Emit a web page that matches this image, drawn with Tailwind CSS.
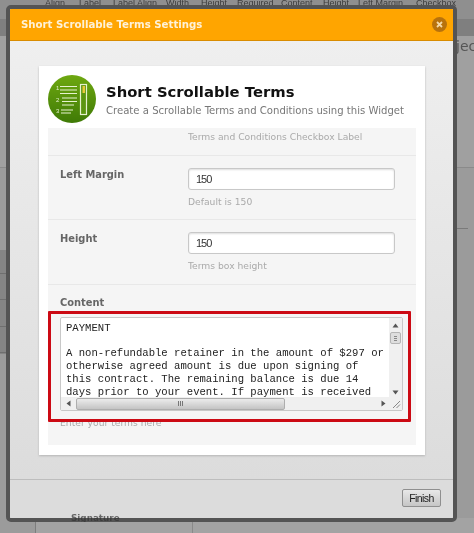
<!DOCTYPE html>
<html lang="en">
  <head>
    <meta charset="UTF-8" />
    <meta name="viewport" content="width=device-width, initial-scale=1.0" />
    <title>Short Scrollable Terms Settings</title>
    <script src="https://cdn.jsdelivr.net/npm/@tailwindcss/browser@4"></script>
  </head>
  <body class="bg-[#9c9c9c]">
    <div class="relative w-[474px] h-[533px] overflow-hidden blur-[0.3px] font-['DejaVu_Sans',sans-serif]">
      <!-- page behind the dialog -->
      <div class="flex flex-col h-full bg-[#9b9b9b]">
        <div class="flex h-[19px] bg-[#8f8f8f] font-['Liberation_Sans',sans-serif] text-[9px] leading-[6px] text-[#3c3c3c] overflow-hidden pl-[45px] whitespace-nowrap">
          <span class="w-[34px]">Align</span>
          <span class="w-[34px]">Label</span>
          <span class="w-[53px]">Label Align</span>
          <span class="w-[35px]">Width</span>
          <span class="w-[36px]">Height</span>
          <span class="w-[44px]">Required</span>
          <span class="w-[42px]">Content</span>
          <span class="w-[35px]">Height</span>
          <span class="w-[58px]">Left Margin</span>
          <span>Checkbox</span>
        </div>
        <div class="h-[17px] bg-[#7f7f7f]"></div>
        <div class="flex justify-end h-[132px] border-b border-[#8a8a8a] pt-[1px] bg-[#a0a0a0]">
          <span class="text-[14px] leading-[18px] text-[#555] w-[18px] overflow-hidden">jec</span>
        </div>
        <div class="flex justify-end h-[61px]">
          <div class="w-[11px] h-[1px] mt-[60px] mr-[6px] bg-[#7a7a7a]"></div>
        </div>
        <div class="flex-1"></div>
        <div class="flex h-[15px] ml-[35px] border-l border-[#7d7d7d] bg-[#a3a3a3]">
          <div class="w-[157px] border-r border-[#8a8a8a]"></div>
        </div>
      </div>
      <div class="absolute left-0 top-[250px] w-[10px] h-[104px] bg-[#858585] flex flex-col">
        <div class="h-[24px] border-b border-[#6f6f6f]"></div>
        <div class="h-[26px] border-b border-[#6f6f6f]"></div>
        <div class="h-[27px] border-b border-[#6f6f6f]"></div>
        <div class="h-[26px] border-b border-[#6f6f6f]"></div>
      </div>

      <!-- dialog -->
      <div class="absolute left-[6px] top-[5px] w-[451px] h-[517px] border-4 border-[#545454] rounded-[5px] flex flex-col overflow-hidden bg-[#dcdcdc]">
        <div class="flex items-center justify-between h-[32px] pl-[11px] pr-[6px] bg-[#ffa500] border-b border-[#d98c00]">
          <span class="text-[10.2px] font-bold text-[#fff2d8]">Short Scrollable Terms Settings</span>
          <span class="flex items-center justify-center w-[15px] h-[15px] rounded-full bg-[#b8720c]">
            <svg width="7" height="7" viewBox="0 0 7 7"><path d="M1 1l5 5M6 1l-5 5" stroke="#f3d9a8" stroke-width="1.8"/></svg>
          </span>
        </div>

        <div class="h-[439px] pt-[25px] px-[29px] bg-gradient-to-b from-[#efefef] to-[#dcdcdc] border-b border-[#bdbdbd]">
          <div class="w-[386px] h-[389px] bg-white shadow-[0_1px_2px_#b5b5b5] px-[9px] pb-[10px] flex flex-col">
            <div class="flex h-[62px] pt-[9px]">
              <svg width="48" height="48" viewBox="0 0 48 48" class="shrink-0">
                <defs>
                  <linearGradient id="logoGreen" x1="0" y1="0" x2="0" y2="1">
                    <stop offset="0" stop-color="#6ea810"/>
                    <stop offset="1" stop-color="#3f7a06"/>
                  </linearGradient>
                </defs>
                <circle cx="24" cy="24" r="24" fill="url(#logoGreen)"/>
                <g stroke="#e6f2cf" stroke-width="1.2">
                  <path d="M12 11.500h17M12 15h17M12 18.500h17M14 23h15M14 26.500h15M14 30h12M13 35h12M13 38h10"/>
                </g>
                <rect x="32.500" y="9.500" width="6" height="30" fill="#5c9610" stroke="#e6f2cf" stroke-width="1.200"/>
                <rect x="34.500" y="11" width="2.500" height="7" fill="#e8c93a"/>
                <text x="8" y="15" font-size="6" fill="#e6f2cf" font-family="Liberation Sans">1</text>
                <text x="8" y="27" font-size="6" fill="#e6f2cf" font-family="Liberation Sans">2</text>
                <text x="8" y="38" font-size="6" fill="#e6f2cf" font-family="Liberation Sans">3</text>
              </svg>
              <div class="ml-[10px] pt-[7px]">
                <div class="text-[14.8px] leading-[20px] font-bold text-[#111]">Short Scrollable Terms</div>
                <div class="text-[10.1px] leading-[14px] mt-[2px] text-[#777] whitespace-nowrap">Create a Scrollable Terms and Conditions using this Widget</div>
              </div>
            </div>

            <div class="flex-1 flex flex-col bg-[#f5f5f5] text-[9.2px] text-[#aaa]">
              <div class="h-[28px] border-b border-[#e8e8e8] pl-[140px] pt-[2px] leading-[14px]">Terms and Conditions Checkbox Label</div>

              <div class="flex h-[64px] border-b border-[#e8e8e8] pl-[12px]">
                <div class="w-[128px] pt-[11px] text-[9.9px] leading-[16px] font-bold text-[#666]">Left Margin</div>
                <div>
                  <div class="w-[207px] h-[22px] mt-[12px] pl-[7px] rounded-[3px] border border-[#c8c8c8] shadow-[inset_0_1px_2px_#ddd] bg-white font-['Liberation_Sans',sans-serif] text-[11px] tracking-[-1px] leading-[20px] text-[#333]">150</div>
                  <div class="mt-[5px] leading-[14px]">Default is 150</div>
                </div>
              </div>

              <div class="flex h-[65px] border-b border-[#e8e8e8] pl-[12px]">
                <div class="w-[128px] pt-[11px] text-[9.9px] leading-[16px] font-bold text-[#666]">Height</div>
                <div>
                  <div class="w-[207px] h-[22px] mt-[12px] pl-[7px] rounded-[3px] border border-[#c8c8c8] shadow-[inset_0_1px_2px_#ddd] bg-white font-['Liberation_Sans',sans-serif] text-[11px] tracking-[-1px] leading-[20px] text-[#333]">150</div>
                  <div class="mt-[5px] leading-[14px]">Terms box height</div>
                </div>
              </div>

              <div class="flex-1 pl-[12px] pt-[10px]">
                <div class="text-[9.9px] leading-[16px] font-bold text-[#666]">Content</div>
                <!-- textarea with its scrollbars -->
                <div class="relative w-[343px] h-[94px] mt-[6px] rounded-[2px] border border-[#c8c8c8] bg-white overflow-hidden">
                  <div class="pl-[5px] pt-[4px] font-['Liberation_Mono',monospace] text-[10.6px] leading-[12.7px] text-[#222] whitespace-pre">PAYMENT

A non-refundable retainer in the amount of $297 or
otherwise agreed amount is due upon signing of
this contract. The remaining balance is due 14
days prior to your event. If payment is received</div>
                  <div class="absolute right-0 top-0 w-[13px] h-[81px] bg-[#f0f0f0] flex flex-col items-center">
                    <svg width="7" height="5" viewBox="0 0 7 5" class="mt-[5px]"><path d="M3.500 0.500L6.500 4.500H0.500Z" fill="#555"/></svg>
                    <div class="flex flex-col justify-center gap-[1px] w-[11px] h-[12px] mt-[4px] px-[3px] rounded-[2px] border border-[#b5b5b5] bg-[#dedede]">
                      <div class="h-[1px] bg-[#888]"></div>
                      <div class="h-[1px] bg-[#888]"></div>
                      <div class="h-[1px] bg-[#888]"></div>
                    </div>
                    <svg width="7" height="5" viewBox="0 0 7 5" class="mt-auto mb-[4px]"><path d="M3.500 4.500L6.500 0.500H0.500Z" fill="#555"/></svg>
                  </div>
                  <div class="absolute left-0 bottom-0 w-full h-[13px] bg-[#f0f0f0] flex items-center">
                    <svg width="5" height="7" viewBox="0 0 5 7" class="ml-[5px]"><path d="M0.500 3.500L4.500 0.500V6.500Z" fill="#555"/></svg>
                    <div class="flex items-center justify-center gap-[1px] w-[209px] h-[12px] ml-[5px] rounded-[2px] border border-[#aeaeae] bg-gradient-to-b from-[#ececec] to-[#c4c4c4]">
                      <div class="w-[1px] h-[5px] bg-[#777]"></div>
                      <div class="w-[1px] h-[5px] bg-[#777]"></div>
                      <div class="w-[1px] h-[5px] bg-[#777]"></div>
                    </div>
                    <svg width="5" height="7" viewBox="0 0 5 7" class="ml-[96px]"><path d="M4.500 3.500L0.500 0.500V6.500Z" fill="#555"/></svg>
                    <svg width="9" height="9" viewBox="0 0 9 9" class="absolute right-[1px] bottom-[1px]"><path d="M8 1L1 8M8 4.500L4.500 8" stroke="#888" stroke-width="1"/></svg>
                  </div>
                </div>
                <div class="mt-[5px] leading-[14px]">Enter your terms here</div>
              </div>
            </div>
          </div>
        </div>

        <div class="flex-1 flex justify-end items-start pt-[9px] pr-[12px] bg-[#dcdcdc]">
          <div class="w-[39px] h-[18px] rounded-[2px] border border-[#8f8f8f] bg-gradient-to-b from-[#e8e8e8] to-[#c6c6c6] text-center font-['Liberation_Sans',sans-serif] text-[10.5px] tracking-[-0.6px] leading-[16px] text-[#222]">Finish</div>
        </div>
      </div>

      <!-- label of the page behind, showing through the dialog's bottom edge -->
      <div class="absolute left-[71px] top-[514px] w-[50px] h-[8px] overflow-hidden text-[8.800px] leading-[8px] font-bold text-[#333]/70">Signature</div>

      <!-- red highlight drawn over the screenshot -->
      <div class="absolute left-[48px] top-[311px] w-[363px] h-[111px] border-[3px] border-[#cc0a14] rounded-[1px]"></div>
    </div>
  </body>
</html>
